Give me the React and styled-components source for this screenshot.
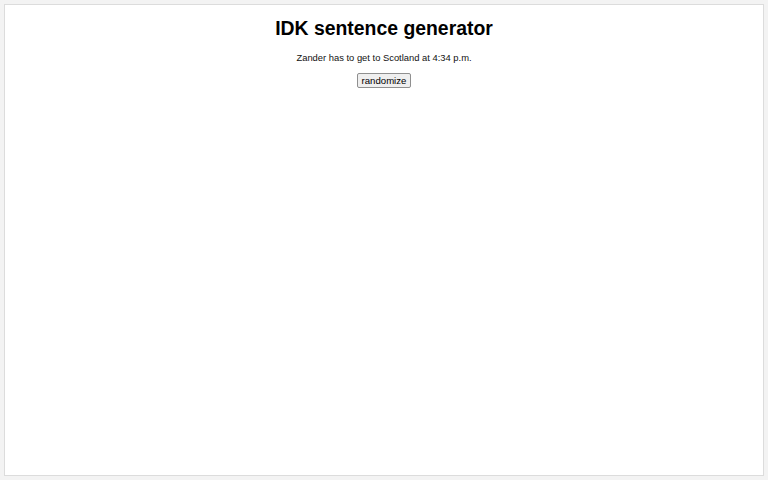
import React, { useState } from "react";
import styled, { createGlobalStyle } from "styled-components";

const GlobalStyle = createGlobalStyle`
  html, body {
    margin: 0;
    padding: 0;
    background: #f3f3f3;
  }
  body {
    font-family: "Liberation Sans", Arial, sans-serif;
  }
`;

const names = ["Zander", "Maya", "Oliver", "Priya", "Felix"];
const places = ["Scotland", "Peru", "Iceland", "Kenya", "Ohio"];
const times = ["4:34 p.m.", "9:15 a.m.", "12:02 p.m.", "7:48 p.m."];

const pick = (list) => list[Math.floor(Math.random() * list.length)];

export default function App() {
  const [sentence, setSentence] = useState(
    "Zander has to get to Scotland at 4:34 p.m."
  );

  const randomize = () => {
    setSentence(`${pick(names)} has to get to ${pick(places)} at ${pick(times)}`);
  };

  return (
    <React.Fragment>
      <GlobalStyle />
      <Page>
        <Panel>
          <Title>IDK sentence generator</Title>
          <Sentence>{sentence}</Sentence>
          <Button onClick={randomize}>randomize</Button>
        </Panel>
      </Page>
    </React.Fragment>
  );
}

const Page = styled.div`
  padding: 4px;
  height: 480px;
  box-sizing: border-box;
`;

const Panel = styled.main`
  box-sizing: border-box;
  height: 100%;
  background: #fff;
  border: 1px solid #dcdcdc;
  display: flex;
  flex-direction: column;
  align-items: center;
`;

const Title = styled.h1`
  margin: 12px 0 0;
  font-size: 19.4px;
  font-weight: 700;
  color: #000;
  line-height: 22px;
`;

const Sentence = styled.p`
  margin: 13px 0 0;
  font-size: 9.4px;
  line-height: 12px;
  color: #111;
`;

const Button = styled.button`
  margin-top: 9px;
  font-family: "Liberation Sans", Arial, sans-serif;
  font-size: 9.6px;
  line-height: 11px;
  padding: 1px 4px;
  color: #000;
  background: #efefef;
  border: 1px solid #8f8f8f;
  border-radius: 2px;
`;
